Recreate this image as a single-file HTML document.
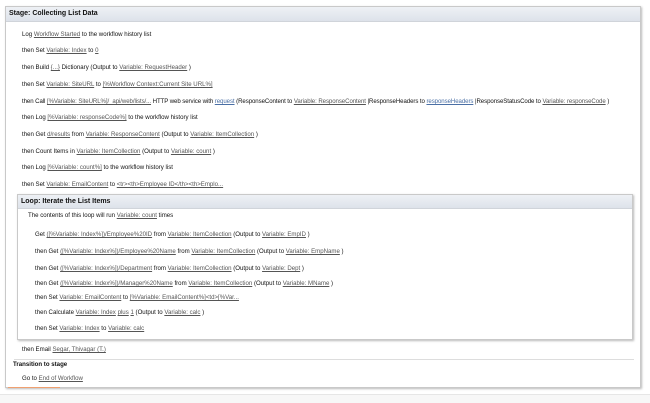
<!DOCTYPE html>
<html><head><style>
body{margin:0;width:650px;height:402px;background:#fff;position:relative;overflow:hidden;font-family:"Liberation Sans",sans-serif;color:#111}
.bottom{position:absolute;left:0;top:394px;width:650px;height:8px;background:#f7f7f7;border-top:1px solid #e6e6e6}
.outer{position:absolute;left:5px;top:6px;width:634px;height:380px;border:1px solid #c9c9c9;box-shadow:1px 1px 2px #bbb;background:#fff}
.hdr{position:absolute;left:0;top:0;right:0;height:14px;background:linear-gradient(#eef1f5,#dde2ea);border-bottom:1px solid #d0d4da;font-weight:bold;font-size:7px;line-height:14px;padding-left:3px}
.loop{position:absolute;left:17px;top:194px;width:614px;height:144px;border:1px solid #c9c9c9;box-shadow:1px 1px 2px #bbb;background:#fff}
.loop .hdr{height:13px;line-height:13px}
.l{position:absolute;font-size:6.1px;white-space:nowrap;line-height:7px}
.l u{color:#555}
.l u.b{color:#4a6fa5}
.tline{position:absolute;left:14px;top:359px;width:620px;height:1px;background:#ddd}
.orange{position:absolute;left:8px;top:387px;width:52px;height:1px;background:#f0a070}
</style></head><body>
<div class="bottom"></div>
<div class="outer"><div class="hdr">Stage: Collecting List Data</div></div>
<div class="l" style="left:22px;top:31px">Log <u>Workflow Started</u> to the workflow history list</div>
<div class="l" style="left:22px;top:47px">then Set <u>Variable: Index</u> to <u>0</u></div>
<div class="l" style="left:22px;top:64px">then Build <u>{...}</u> Dictionary (Output to <u>Variable: RequestHeader</u> )</div>
<div class="l" style="left:22px;top:81px">then Set <u>Variable: SiteURL</u> to <u>[%Workflow Context:Current Site URL%]</u></div>
<div class="l" style="left:22px;top:98px;letter-spacing:-0.08px">then Call <u>[%Variable: SiteURL%]/_api/web/lists/...</u> HTTP web service with <u class="b">request</u> (ResponseContent to <u>Variable: ResponseContent</u> |ResponseHeaders to <u class="b">responseHeaders</u> |ResponseStatusCode to <u>Variable: responseCode</u> )</div>
<div class="l" style="left:22px;top:114px">then Log <u>[%Variable: responseCode%]</u> to the workflow history list</div>
<div class="l" style="left:22px;top:131px">then Get <u>d/results</u> from <u>Variable: ResponseContent</u> (Output to <u>Variable: ItemCollection</u> )</div>
<div class="l" style="left:22px;top:148px">then Count Items in <u>Variable: ItemCollection</u> (Output to <u>Variable: count</u> )</div>
<div class="l" style="left:22px;top:164px">then Log <u>[%Variable: count%]</u> to the workflow history list</div>
<div class="l" style="left:22px;top:181px">then Set <u>Variable: EmailContent</u> to <u>&lt;tr&gt;&lt;th&gt;Employee ID&lt;/th&gt;&lt;th&gt;Emplo...</u></div>
<div class="loop"><div class="hdr">Loop: Iterate the List Items</div></div>
<div class="l" style="left:28px;top:212px">The contents of this loop will run <u>Variable: count</u> times</div>
<div class="l" style="left:35px;top:231px">Get <u>([%Variable: Index%])/Employee%20ID</u> from <u>Variable: ItemCollection</u> (Output to <u>Variable: EmpID</u> )</div>
<div class="l" style="left:35px;top:248px">then Get <u>([%Variable: Index%])/Employee%20Name</u> from <u>Variable: ItemCollection</u> (Output to <u>Variable: EmpName</u> )</div>
<div class="l" style="left:35px;top:265px">then Get <u>([%Variable: Index%])/Department</u> from <u>Variable: ItemCollection</u> (Output to <u>Variable: Dept</u> )</div>
<div class="l" style="left:35px;top:280px">then Get <u>([%Variable: Index%])/Manager%20Name</u> from <u>Variable: ItemCollection</u> (Output to <u>Variable: MName</u> )</div>
<div class="l" style="left:35px;top:294px">then Set <u>Variable: EmailContent</u> to <u>[%Variable: EmailContent%]&lt;td&gt;[%Var...</u></div>
<div class="l" style="left:35px;top:309px">then Calculate <u>Variable: Index</u> <u>plus</u> <u>1</u> (Output to <u>Variable: calc</u> )</div>
<div class="l" style="left:35px;top:325px">then Set <u>Variable: Index</u> to <u>Variable: calc</u></div>
<div class="l" style="left:22px;top:346px">then Email <u>Segar, Thivagar (T.)</u></div>
<div class="tline"></div>
<div class="l" style="left:13px;top:361px;font-weight:bold">Transition to stage</div>
<div class="l" style="left:22px;top:375px">Go to <u>End of Workflow</u></div>
<div class="orange"></div>
</body></html>
